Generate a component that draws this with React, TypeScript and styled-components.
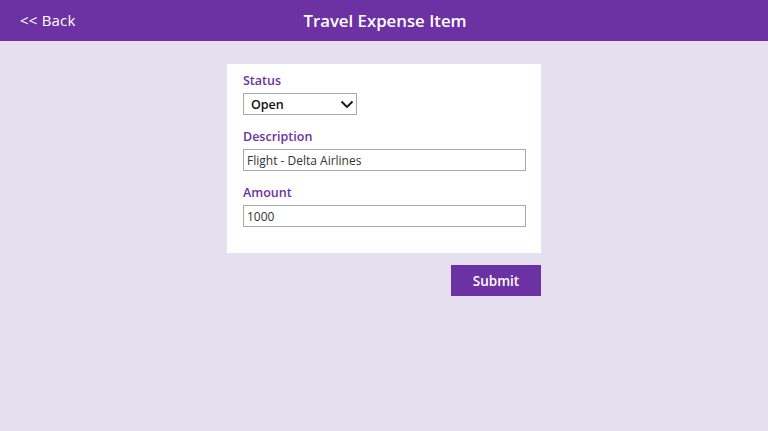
import styled, { createGlobalStyle } from 'styled-components';

const GlobalStyle = createGlobalStyle`
  html, body {
    margin: 0;
    padding: 0;
    background: #e6dff0;
    font-family: 'Open Sans', 'Noto Sans', sans-serif;
  }
`;

export default function App() {
  return (
    <>
      <GlobalStyle />
      <Page>
        <Header>
          <Back>&lt;&lt; Back</Back>
          <Title>Travel Expense Item</Title>
        </Header>
        <Main>
          <Card>
            <Field>
              <Label>Status</Label>
              <SelectBox>
                <span>Open</span>
                <svg width="14" height="14" viewBox="0 0 14 14">
                  <path d="M1.5 4.5 L7 10 L12.5 4.5" fill="none" stroke="#111" strokeWidth="1.8" />
                </svg>
              </SelectBox>
            </Field>
            <Field>
              <Label>Description</Label>
              <TextInput defaultValue="Flight - Delta Airlines" />
            </Field>
            <Field>
              <Label>Amount</Label>
              <TextInput defaultValue="1000" />
            </Field>
          </Card>
          <Actions>
            <SubmitButton>Submit</SubmitButton>
          </Actions>
        </Main>
      </Page>
    </>
  );
}

const Page = styled.div`
  width: 768px;
  height: 431px;
  background: #e6dff0;
`;
const Header = styled.header`
  position: relative;
  height: 41px;
  background: #6c31a3;
  color: #fff;
  display: flex;
  align-items: center;
  justify-content: center;
`;
const Back = styled.span`
  position: absolute;
  left: 20px;
  top: 10px;
  font-size: 15px;
  font-weight: 500;
  letter-spacing: 0.2px;
`;
const Title = styled.h1`
  margin: 0;
  font-size: 16.8px;
  font-weight: 600;
  margin-left: 2px;
`;
const Main = styled.main`
  width: 314px;
  margin: 23px auto 0;
`;
const Card = styled.div`
  background: #fff;
  padding: 8px 15px 26px 16px;
  display: flex;
  flex-direction: column;
  gap: 13px;
`;
const Field = styled.div`
  display: flex;
  flex-direction: column;
  gap: 3px;
`;
const Label = styled.label`
  color: #6c31a3;
  font-size: 12.5px;
  font-weight: 600;
  line-height: 18px;
`;
const SelectBox = styled.div`
  box-sizing: border-box;
  width: 114px;
  height: 22px;
  border: 1px solid #a8a8a8;
  display: flex;
  align-items: center;
  justify-content: space-between;
  padding: 0 2px 0 7px;
  font-size: 12.5px;
  font-weight: 600;
  color: #111;
`;
const TextInput = styled.input`
  box-sizing: border-box;
  width: 283px;
  height: 22px;
  border: 1px solid #a8a8a8;
  padding: 0 3px;
  font-family: 'Open Sans', 'Noto Sans', sans-serif;
  font-size: 12px;
  color: #333;
  outline: none;
`;
const Actions = styled.div`
  display: flex;
  justify-content: flex-end;
  margin-top: 12px;
`;
const SubmitButton = styled.button`
  width: 90px;
  height: 31px;
  border: none;
  background: #6c31a3;
  color: #fff;
  font-family: 'Open Sans', 'Noto Sans', sans-serif;
  font-size: 13.5px;
  font-weight: 600;
  cursor: pointer;
`;
